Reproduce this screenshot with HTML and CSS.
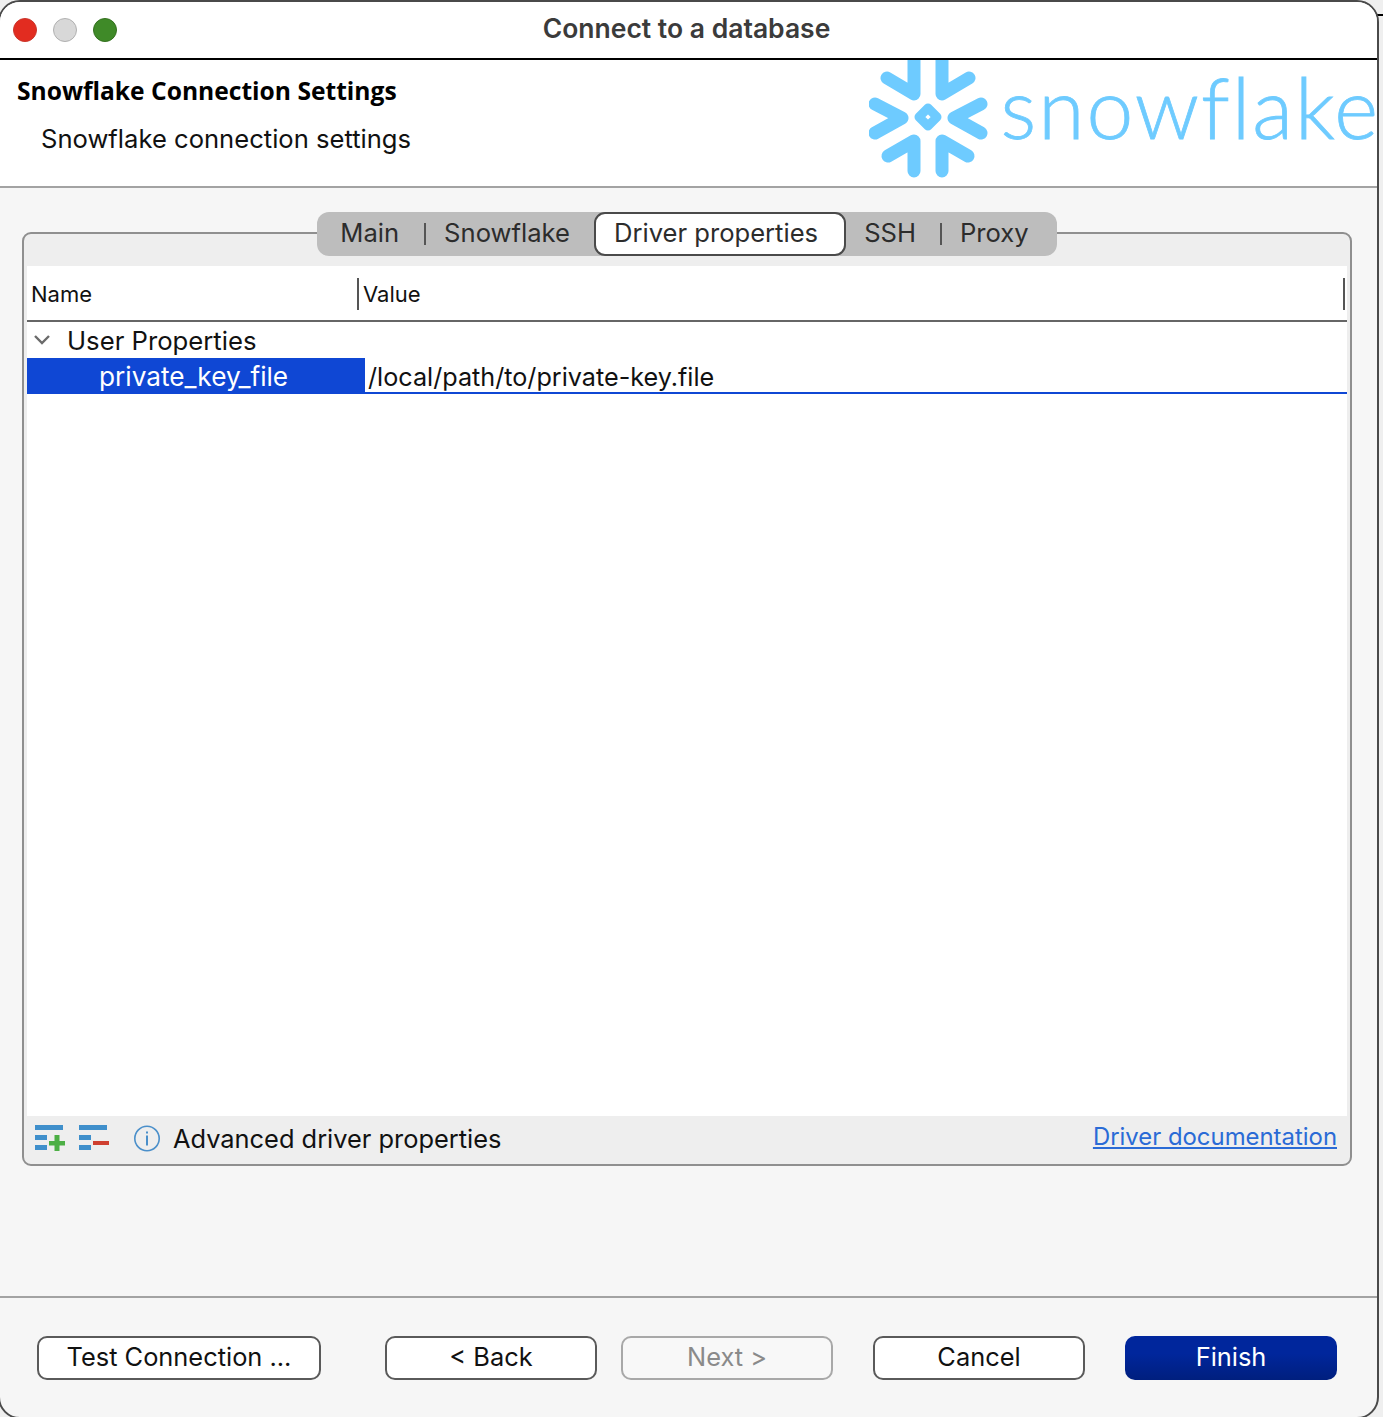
FILE: index.html
```html
<!DOCTYPE html>
<html lang="en">
<head>
  <meta charset="UTF-8">
  <title>Connect to a database</title>
  <link rel="stylesheet" href="styles.css">
</head>
<body>
  <div class="behind-edge"></div>
  <div class="window">
    <div class="titlebar">
      <div class="lights">
        <span class="light red"></span>
        <span class="light grey"></span>
        <span class="light green"></span>
      </div>
      <div class="wintitle">Connect to a database</div>
    </div>

    <div class="header">
      <div class="heading">
        <h1>Snowflake Connection Settings</h1>
        <p>Snowflake connection settings</p>
      </div>
      <div class="logo">
        <svg class="flake" width="120" height="118" viewBox="869 60 120 118" fill="none" stroke="#6ecbff" stroke-width="13" stroke-linecap="round" stroke-linejoin="round">
          <path d="M914 50V94L887 78"/>
          <path d="M942 50V94L969 78"/>
          <path d="M875 104L902 118L875 133"/>
          <path d="M981 104L954 118L981 133"/>
          <path d="M914 171V141L888 156"/>
          <path d="M942 171V141L968 156"/>
          <path d="M928 108L937 117L928 126L919 117Z" stroke-width="9"/>
        </svg>
        <span class="wordmark">snowflake</span>
      </div>
    </div>

    <div class="content">
      <div class="group">
        <div class="tabs">
          <div class="tab first">Main</div>
          <div class="tab sep"></div>
          <div class="tab next">Snowflake</div>
          <div class="tab active">Driver properties</div>
          <div class="tab after">SSH</div>
          <div class="tab sep"></div>
          <div class="tab next last">Proxy</div>
        </div>

        <div class="table">
          <div class="thead">
            <div class="th name">Name</div>
            <div class="th value">Value</div>
          </div>
          <div class="tree-row">
            <svg class="chevron" width="18" height="12" viewBox="0 0 18 12" fill="none" stroke="#6b6b6b" stroke-width="2.4"><path d="M2 2L9 9L16 2"/></svg>
            <span>User Properties</span>
          </div>
          <div class="prop-row">
            <div class="prop-name">private_key_file</div>
            <div class="prop-value">/local/path/to/private-key.file</div>
          </div>
        </div>

        <div class="tablefoot">
          <svg class="tool" width="32" height="28" viewBox="0 0 32 28">
            <rect x="1" y="0" width="28" height="5" fill="#3f8fcb"/>
            <rect x="1" y="10" width="12" height="5" fill="#3f8fcb"/>
            <rect x="1" y="20" width="12" height="5" fill="#3f8fcb"/>
            <rect x="15" y="16" width="16" height="4.5" fill="#4caf45"/>
            <rect x="20.5" y="10" width="5" height="16" fill="#4caf45"/>
          </svg>
          <svg class="tool" width="32" height="28" viewBox="0 0 32 28">
            <rect x="1" y="0" width="28" height="5" fill="#3f8fcb"/>
            <rect x="1" y="10" width="12" height="5" fill="#3f8fcb"/>
            <rect x="1" y="20" width="12" height="5" fill="#3f8fcb"/>
            <rect x="15" y="16" width="16" height="4" fill="#cf4030"/>
          </svg>
          <svg class="info" width="28" height="28" viewBox="0 0 28 28" fill="none">
            <circle cx="14" cy="13.5" r="12.2" stroke="#4a8fca" stroke-width="1.6"/>
            <rect x="13" y="10.5" width="2" height="10" fill="#4a8fca"/>
            <rect x="13" y="6.5" width="2" height="2" fill="#4a8fca"/>
          </svg>
          <span class="adv">Advanced driver properties</span>
          <a class="doclink" href="#">Driver documentation</a>
        </div>
      </div>
    </div>

    <div class="buttons">
      <button class="btn test">Test Connection ...</button>
      <button class="btn back">&lt; Back</button>
      <button class="btn next-btn" disabled>Next &gt;</button>
      <button class="btn cancel">Cancel</button>
      <button class="btn primary">Finish</button>
    </div>
  </div>
</body>
</html>
```
FILE: styles.css
```css
* {box-sizing: border-box;}
html, body {
  margin: 0;
  height: 100%;
  overflow: hidden;
  background: #efefef;
}
body {
  font-family: Inter, "Liberation Sans", sans-serif;
  color: #111;
}
.behind-edge {
  position: absolute;
  top: 14px;
  right: 0;
  width: 10px;
  height: 2px;
  background: #000;
}
.window {
  position: relative;
  width: 1381px;
  height: 1419px;
  margin-left: -2px;
  display: flex;
  flex-direction: column;
  background: #f6f6f6;
  border: 2px solid #4a4a4a;
  border-radius: 22px;
  overflow: hidden;
}

/* title bar */
.titlebar {
  height: 58px;
  flex: none;
  display: flex;
  align-items: center;
  position: relative;
  background: #fff;
  border-bottom: 2px solid #000;
}
.lights {
  display: flex;
  gap: 16px;
  padding-left: 13px;
}
.light {
  width: 24px;
  height: 24px;
  border-radius: 50%;
  border: 1px solid;
}
.red {background: #e22c20; border-color: #c9362c;}
.grey {background: #d8d8d8; border-color: #b0b0b0;}
.green {background: #3f8a28; border-color: #34701f;}
.wintitle {
  position: absolute;
  left: 0;
  right: 4px;
  top: 10px;
  text-align: center;
  font-size: 26.5px;
  font-weight: 600;
  color: #3b3b3b;
}

/* header */
.header {
  height: 128px;
  flex: none;
  display: flex;
  justify-content: space-between;
  background: #fff;
  border-bottom: 2px solid #a3a3a3;
}
.heading {padding: 16px 0 0 17px;}
.heading h1 {
  margin: 0;
  font-size: 24.6px;
  line-height: 30px;
  font-weight: 700;
  font-family: "Open Sans", sans-serif;
  color: #000;
}
.heading p {
  margin: 18px 0 0 24px;
  font-size: 25.6px;
  line-height: 30px;
  color: #111;
}
.logo {
  display: flex;
  align-items: flex-start;
  gap: 12px;
  margin-right: -3px;
}
.flake {flex: none; display: block;}
.wordmark {
  font-family: Lato, sans-serif;
  font-weight: 300;
  font-size: 84px;
  line-height: 93px;
  letter-spacing: 2px;
  -webkit-text-stroke: 0.8px #6ecbff;
  color: #6ecbff;
}

/* group box */
.content {
  flex: 1;
  padding: 44px 25px 0 22px;
  border-bottom: 2px solid #a3a3a3;
}
.group {
  height: 934px;
  display: flex;
  flex-direction: column;
  background: #eeeeee;
  border: 2px solid #8f8f8f;
  border-radius: 9px;
  padding: 0 3px;
}
.tabs {
  display: flex;
  align-self: center;
  align-items: center;
  height: 44px;
  margin-top: -22px;
  margin-bottom: 10px;
  flex: none;
  font-size: 25.6px;
  color: #2c2c2c;
  background: #bdbdbd;
  border-radius: 12px;
}
.tab {line-height: 38px;}
.first, .next, .after {margin-bottom: 2px;}
.first {padding: 0 25px 0 23px;}
.tab.sep {
  width: 2px;
  height: 22px;
  background: #555;
}
.next {padding: 0 24px 0 18px;}
.active {
  height: 44px;
  padding: 0 26px 0 18px;
  background: #fff;
  border: 2px solid #4a4a4a;
  border-radius: 11px;
}
.after {padding: 0 24px 0 18px;}
.last {padding-right: 28px;}

/* table */
.table {
  flex: 1;
  background: #fff;
}
.thead {
  display: flex;
  height: 56px;
  padding-top: 12px;
  border-bottom: 2px solid #666;
  font-size: 22px;
}
.th {
  height: 32px;
  line-height: 32px;
}
.th.name {width: 330px; padding-left: 4px;}
.th.value {
  flex: 1;
  padding-left: 4px;
  border-left: 2px solid #555;
  border-right: 2px solid #555;
  margin-right: 2px;
}
.tree-row {
  display: flex;
  align-items: center;
  height: 36px;
  font-size: 25.7px;
}
.chevron {margin: 0 16px 0 6px;}
.prop-row {
  display: flex;
  height: 36px;
}
.prop-name {
  width: 338px;
  padding-left: 72px;
  font-size: 26.2px;
  background: #0f47d4;
  color: #fff;
  line-height: 38px;
}
.prop-value {
  flex: 1;
  padding-left: 3px;
  font-size: 25.2px;
  line-height: 38px;
  border-bottom: 2px solid #0f47d4;
}

/* under the table */
.tablefoot {
  flex: none;
  height: 48px;
  display: flex;
  align-items: center;
  font-size: 25.4px;
}
.tool {margin: 0 5px 2px 7px; flex: none;}
.info {margin: 0 0 2px 18px; flex: none;}
.adv {margin: 0 0 4px 12px;}
.doclink {
  margin-left: auto;
  margin-right: 10px;
  margin-bottom: 8px;
  font-size: 23.9px;
  color: #2a6bd6;
}

/* bottom buttons */
.buttons {
  flex: none;
  height: 119px;
  display: flex;
  padding: 38px 0 0 37px;
}
.btn {
  width: 212px;
  height: 44px;
  padding: 0 0 4px;
  font-family: inherit;
  font-size: 25.4px;
  color: #111;
  background: #fff;
  border: 2px solid #5a5a5a;
  border-radius: 10px;
}
.test {width: 284px; margin-right: 64px;}
.back {margin-right: 24px;}
.next-btn {
  margin-right: 40px;
  color: #8a8a8a;
  background: #f8f8f8;
  border-color: #a8a8a8;
}
.cancel {margin-right: 40px;}
.primary {
  color: #fff;
  border: none;
  background: linear-gradient(to bottom, #00269c 40%, #001f7e 100%);
}
```
